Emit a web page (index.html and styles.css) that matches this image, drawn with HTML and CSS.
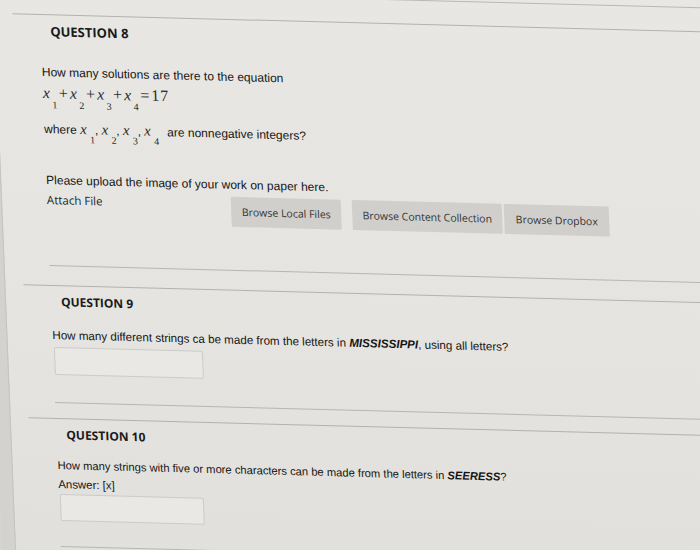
FILE: index.html
```html
<!DOCTYPE html>
<html lang="en">
<head>
<meta charset="utf-8">
<title>Questions</title>
<link rel="stylesheet" href="styles.css">
</head>
<body>
<div class="screen">
  <div class="panel">
    <div class="prev-sep"></div>

    <section class="question q8">
      <h2 class="q-title">QUESTION 8</h2>
      <div class="q-body">
        <p class="text intro">How many solutions are there to the equation</p>
        <p class="math"><i class="mx">x</i><span class="sb">1</span><span class="op">+</span><i class="mx">x</i><span class="sb">2</span><span class="op">+</span><i class="mx">x</i><span class="sb">3</span><span class="op">+</span><i class="mx">x</i><span class="sb">4</span><span class="op">=</span><span class="num">17</span></p>
        <p class="text where">where <i class="wx">x</i><span class="wsb">1</span>, <i class="wx">x</i><span class="wsb">2</span>, <i class="wx">x</i><span class="wsb">3</span>, <i class="wx">x</i><span class="wsb last">4</span> are nonnegative integers?</p>
        <p class="text upload">Please upload the image of your work on paper here.</p>
        <div class="attach-row">
          <span class="attach-label">Attach File</span>
          <div class="btn-row">
            <span class="btn btn-local">Browse Local Files</span>
            <span class="btn btn-content">Browse Content Collection</span>
            <span class="btn btn-dropbox">Browse Dropbox</span>
          </div>
        </div>
      </div>
      <div class="separator sep-q8"></div>
    </section>

    <section class="question q9">
      <h2 class="q-title">QUESTION 9</h2>
      <div class="q-body">
        <p class="text prompt-q9">How many different strings ca be made from the letters in <b><i>MISSISSIPPI</i></b>, using all letters?</p>
        <input class="answer-box box-q9" type="text" aria-label="Answer">
      </div>
      <div class="separator sep-q9"></div>
    </section>

    <section class="question q10">
      <h2 class="q-title">QUESTION 10</h2>
      <div class="q-body">
        <p class="text prompt-q10">How many strings with five or more characters can be made from the letters in <b><i>SEERESS</i></b>?</p>
        <p class="text answer-label">Answer: [x]</p>
        <input class="answer-box box-q10" type="text" aria-label="Answer">
      </div>
      <div class="separator sep-q10"></div>
    </section>
  </div>
</div>
</body>
</html>
```

FILE: styles.css
```css
html, body {
  margin: 0;
  padding: 0;
}

body {
  background: #d6d5d1;
  overflow: hidden;
  color: #151515;
  font-family: "Liberation Sans", Arial, sans-serif;
}

/* the photographed screen is slightly skewed */
.screen {
  margin: -40px 0 0 -20px;
  width: 740px;
  min-height: 590px;
  background: #d3d2ce;
  transform: matrix(1, 0.026, 0.04, 1, 0, 0);
  transform-origin: 20px 40px;
}

.panel {
  margin-left: 13px;
  padding-top: 29px;
  min-height: 561px;
  border-left: 1px solid #c4c3bf;
  background: linear-gradient(to bottom, #e8e7e3 0%, #e5e4e0 60%, #e1e0dc 100%);
}

.prev-sep {
  margin-left: 44px;
  border-top: 1px solid #b9b8b4;
}

.question {
  margin-left: 18px;
  border-top: 1px solid #b3b2ae;
}

.q8 { margin-top: 23px; }
.q9 { margin-top: 19px; }
.q10 { margin-top: 15px; }

.q-title {
  margin: 7px 0 0;
  padding-left: 37px;
  font-family: "Open Sans", sans-serif;
  font-weight: 700;
  font-size: 13px;
  line-height: 18px;
  color: #1a1a1a;
}

.q9 .q-title,
.q10 .q-title {
  font-size: 12px;
}

.q-body {
  padding-left: 27px;
}

.text {
  margin: 0;
  font-family: "Liberation Sans", Arial, sans-serif;
  font-size: 12px;
  line-height: 16px;
  color: #151515;
}

.intro { margin-top: 24px; }

/* equation */
.math {
  margin: 3px 0 0;
  height: 20px;
  line-height: 20px;
  font-family: "Liberation Serif", "Times New Roman", serif;
  font-size: 16px;
  color: #2a2a2a;
  white-space: nowrap;
}

.mx {
  font-family: "Liberation Serif", "Times New Roman", serif;
  font-style: italic;
}

.sb {
  display: inline-block;
  margin-left: 2px;
  font-size: 10px;
  line-height: 1;
  vertical-align: -10px;
}

.op {
  display: inline-block;
  margin: 0 2px;
}

.num {
  letter-spacing: 1px;
}

/* "where" line */
.where {
  margin-top: 17px;
  height: 16px;
  white-space: nowrap;
}

.wx {
  font-family: "Liberation Serif", "Times New Roman", serif;
  font-style: italic;
  font-size: 15px;
  color: #2a2a2a;
}

.wsb {
  display: inline-block;
  margin: 0 0 0 3px;
  font-family: "Liberation Serif", "Times New Roman", serif;
  font-size: 10px;
  line-height: 1;
  vertical-align: -9px;
  color: #2a2a2a;
}

.wsb.last {
  margin-right: 5px;
}

.upload { margin-top: 36px; }

.attach-row {
  display: flex;
  align-items: flex-start;
  margin-top: 4px;
}

.attach-label {
  flex-shrink: 0;
  width: 184px;
  font-family: "Open Sans", sans-serif;
  font-size: 11.5px;
  line-height: 16px;
  color: #222;
}

.btn-row {
  display: flex;
}

.btn {
  display: block;
  height: 30px;
  line-height: 30px;
  text-align: center;
  background: #d0cfcb;
  border-radius: 1px;
  font-family: "Open Sans", sans-serif;
  font-size: 10.5px;
  color: #333;
  white-space: nowrap;
}

.btn-local { width: 110px; }
.btn-content { width: 150px; margin-left: 11px; }
.btn-dropbox { width: 105px; margin-left: 2px; }

.separator {
  margin-left: 27px;
  border-top: 1px solid #b7b6b2;
}

.sep-q8 { margin-top: 43px; }
.sep-q9 { margin-top: 27px; }
.sep-q10 { margin-top: 25px; }

.prompt-q9 { margin-top: 16px; font-size: 11.6px; }
.prompt-q10 { margin-top: 13px; font-size: 11.2px; }
.answer-label { margin-top: 3px; font-size: 11.4px; }

.answer-box {
  display: block;
  box-sizing: border-box;
  padding: 0;
  border: 1px solid #cccbc7;
  border-radius: 2px;
  background: #e9e8e5;
  margin-left: 1px;
}

.box-q9 {
  margin-top: 4px;
  width: 149px;
  height: 28px;
}

.box-q10 {
  margin-top: 2px;
  width: 144px;
  height: 27px;
}
```
